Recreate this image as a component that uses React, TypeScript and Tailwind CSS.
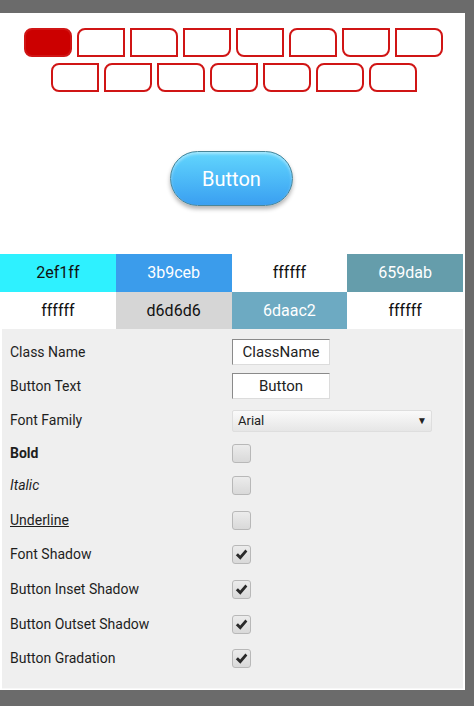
const tabRow1 = [
  "bg-[#cc0000] rounded-[8px]",
  "rounded-tl-[8px]",
  "rounded-tr-[8px]",
  "rounded-br-[8px]",
  "rounded-bl-[8px]",
  "rounded-t-[8px]",
  "rounded-b-[8px]",
  "rounded-r-[8px]",
];

const tabRow2 = [
  "rounded-l-[8px]",
  "rounded-tl-[8px] rounded-br-[8px]",
  "rounded-tr-[8px] rounded-bl-[8px]",
  "rounded-tl-[8px] rounded-bl-[8px] rounded-br-[8px]",
  "rounded-tr-[8px] rounded-bl-[8px] rounded-br-[8px]",
  "rounded-tl-[8px] rounded-tr-[8px] rounded-br-[8px]",
  "rounded-tl-[8px] rounded-tr-[8px] rounded-bl-[8px]",
];

const swatches = [
  { hex: "2ef1ff", cls: "bg-[#2ef1ff] text-[#111]" },
  { hex: "3b9ceb", cls: "bg-[#3b9ceb] text-white" },
  { hex: "ffffff", cls: "bg-white text-[#111]" },
  { hex: "659dab", cls: "bg-[#659dab] text-white" },
  { hex: "ffffff", cls: "bg-white text-[#111]" },
  { hex: "d6d6d6", cls: "bg-[#d6d6d6] text-[#111]" },
  { hex: "6daac2", cls: "bg-[#6daac2] text-white" },
  { hex: "ffffff", cls: "bg-white text-[#111]" },
];

function Tab({ cls }: { cls: string }) {
  return <div className={`w-[48px] h-[29px] border-2 border-[#d01515] ${cls}`} />;
}

function Checkbox({ checked }: { checked?: boolean }) {
  return (
    <div className="w-[19px] h-[19px] rounded-[3px] border border-[#b8b8b8] bg-gradient-to-b from-[#ececec] to-[#d9d9d9] flex items-center justify-center">
      {checked && (
        <svg width="13" height="13" viewBox="0 0 16 16">
          <path d="M1 9 L3.6 6.4 L6.4 9.2 L12.8 1.8 L15.2 4.2 L6.6 14.4 Z" fill="#2a2a2a" />
        </svg>
      )}
    </div>
  );
}

function Row({ label, labelCls = "", h, children }: { label: string; labelCls?: string; h: string; children: React.ReactNode }) {
  return (
    <div className={`flex items-center ${h}`}>
      <div className={`w-[230px] pl-[8px] text-[14px] text-[#1e1e1e] ${labelCls}`}>{label}</div>
      <div className="flex items-center">{children}</div>
    </div>
  );
}

export default function App() {
  return (
    <div className="w-[474px] h-[706px] bg-[#6b6b6b] pt-[13px] font-['Roboto',sans-serif]">
      <div className="w-[465px] h-[677px] bg-white pr-[2px] flex flex-col">
        <div className="pt-[15px] pl-[4px] flex flex-col items-center gap-[6px]">
          <div className="flex gap-[5px]">
            {tabRow1.map((c, i) => (
              <Tab key={i} cls={c} />
            ))}
          </div>
          <div className="flex gap-[5px]">
            {tabRow2.map((c, i) => (
              <Tab key={i} cls={c} />
            ))}
          </div>
        </div>

        <div className="flex justify-center pt-[59px] pb-[48px]">
          <button className="w-[123px] h-[55px] rounded-full border-[1.5px] border-[#4a8699] bg-gradient-to-b from-[#62d6fd] to-[#3a9ff1] text-white text-[20px] shadow-[inset_0_2px_3px_rgba(255,255,255,0.45),0_3px_4px_rgba(0,0,0,0.3)]">
            Button
          </button>
        </div>

        <div className="grid grid-cols-4 text-[16px]">
          {swatches.map((s, i) => (
            <div key={i} className={`flex items-center justify-center ${i < 4 ? "h-[38px]" : "h-[37px]"} ${s.cls}`}>
              {s.hex}
            </div>
          ))}
        </div>

        <div className="ml-[2px] h-[360px] bg-[#efefef] pt-[6px] border-b border-[#f8f8f8]">
          <Row label="Class Name" h="h-[34px]">
            <div className="w-[98px] h-[26px] bg-white border border-t-[#8a8a8a] border-l-[#8a8a8a] border-r-[#dcdcdc] border-b-[#dcdcdc] flex items-center justify-center text-[15px] text-[#222]">
              ClassName
            </div>
          </Row>
          <Row label="Button Text" h="h-[34px]">
            <div className="w-[98px] h-[26px] bg-white border border-t-[#8a8a8a] border-l-[#8a8a8a] border-r-[#dcdcdc] border-b-[#dcdcdc] flex items-center justify-center text-[15px] text-[#222]">
              Button
            </div>
          </Row>
          <Row label="Font Family" h="h-[35px]">
            <div className="w-[200px] h-[22px] rounded-[2px] border border-[#dedede] bg-gradient-to-b from-[#fafafa] to-[#e6e6e6] flex items-center justify-between pl-[5px] pr-[4px] text-[13px] text-[#222]">
              <span>Arial</span>
              <span className="text-[10px]">▼</span>
            </div>
          </Row>
          <Row label="Bold" labelCls="font-bold" h="h-[30px]">
            <Checkbox />
          </Row>
          <Row label="Italic" labelCls="italic" h="h-[35px]">
            <Checkbox />
          </Row>
          <Row label="Underline" labelCls="underline" h="h-[34px]">
            <Checkbox />
          </Row>
          <Row label="Font Shadow" h="h-[35px]">
            <Checkbox checked />
          </Row>
          <Row label="Button Inset Shadow" h="h-[35px]">
            <Checkbox checked />
          </Row>
          <Row label="Button Outset Shadow" h="h-[34px]">
            <Checkbox checked />
          </Row>
          <Row label="Button Gradation" h="h-[34px]">
            <Checkbox checked />
          </Row>
        </div>
      </div>
    </div>
  );
}
